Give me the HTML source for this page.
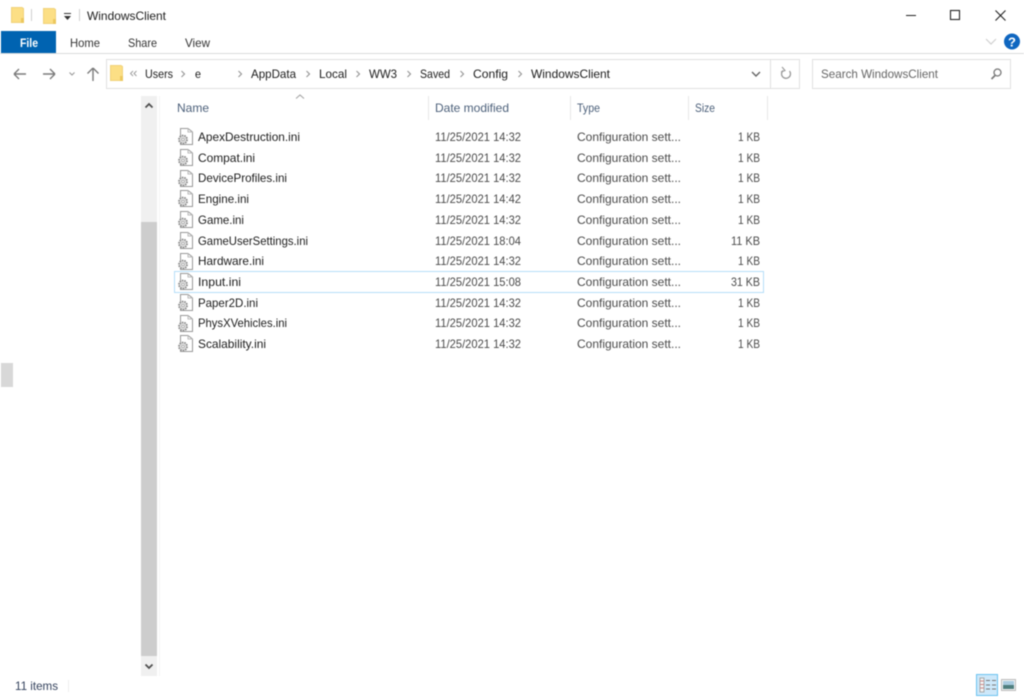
<!DOCTYPE html>
<html><head><meta charset="utf-8"><style>
html,body{margin:0;padding:0;background:#fff;width:1024px;height:698px;overflow:hidden}
svg{display:block;filter:blur(0.4px)}
text{font-family:"Liberation Sans",sans-serif;font-size:12px;fill:#1c1c1c}
.h{fill:#4c607a}.g{fill:#4a4a4a}.s{fill:#666}
</style></head><body>
<svg width="1024" height="698" viewBox="0 0 1024 698" xmlns="http://www.w3.org/2000/svg">
<defs>
<g id="fld"><path d="M.5 .5H11L12.500 1.500V15.500H.500Z" fill="#fcdf85" stroke="#f0d27a" stroke-width="1"/><rect x="10" y="11" width="3" height="5" fill="#ecc85e"/></g>
<g id="ini"><path d="M4.500 1.500H12L16.500 5V17.500H4.500Z" fill="#fff" stroke="#999" stroke-width="1"/><path d="M12 1.500V5H16.500" fill="none" stroke="#bbb"/><circle cx="7" cy="12.500" r="4" fill="#e2e2e2" stroke="#8c8c8c" stroke-width="1.800" stroke-dasharray="1.600 .9"/><circle cx="7" cy="12.500" r="1.300" fill="#fff" stroke="#999" stroke-width=".7"/></g>
<path id="chev" d="M-1.500 -3L1.500 0L-1.500 3" fill="none" stroke="#999" stroke-width="1.200"/>
</defs>

<!-- title bar -->
<use href="#fld" x="11" y="7"/>
<rect x="31" y="9" width="1" height="12" fill="#d0d0d0"/>
<use href="#fld" x="43" y="8"/>
<rect x="64" y="13" width="7" height="1" fill="#333"/>
<path d="M64 16H71L67.500 20Z" fill="#333"/>
<rect x="79" y="9" width="1" height="12" fill="#d0d0d0"/>
<text x="87" y="20" textLength="79" lengthAdjust="spacingAndGlyphs">WindowsClient</text>
<rect x="906" y="15" width="10" height="1" fill="#222"/>
<rect x="950.500" y="10.500" width="9" height="9" fill="none" stroke="#222" stroke-width="1.100"/>
<path d="M995.500 10.500L1005.500 20.500M1005.500 10.500L995.500 20.500" stroke="#222" stroke-width="1.100"/>

<!-- ribbon -->
<rect x="1" y="31" width="55" height="22" fill="#0063b1"/>
<rect x="0" y="53" width="1024" height="1" fill="#dadbdc"/>
<text x="20" y="47" textLength="18" lengthAdjust="spacingAndGlyphs" style="fill:#fff;font-weight:bold;font-size:11.500px">File</text>
<text x="70" y="47" textLength="30" lengthAdjust="spacingAndGlyphs" style="fill:#333">Home</text>
<text x="128" y="47" textLength="29" lengthAdjust="spacingAndGlyphs" style="fill:#333">Share</text>
<text x="185" y="47" textLength="25" lengthAdjust="spacingAndGlyphs" style="fill:#333">View</text>
<path d="M986 39L991 44L996 39" fill="none" stroke="#d0d0d0" stroke-width="1.200"/>
<circle cx="1012" cy="41.500" r="8" fill="#0f66c0"/>
<text x="1012" y="46.500" text-anchor="middle" style="fill:#fff;font-weight:bold;font-size:13px">?</text>

<!-- nav -->
<path d="M14 74H26M14 74L19 69M14 74L19 79" fill="none" stroke="#7a7a7a" stroke-width="1.400"/>
<path d="M55 74H43M55 74L50 69M55 74L50 79" fill="none" stroke="#7a7a7a" stroke-width="1.400"/>
<path d="M69.500 72.500L72 75L74.500 72.500" fill="none" stroke="#999" stroke-width="1.100"/>
<path d="M93 81V68M93 68L87.500 73.500M93 68L98.500 73.500" fill="none" stroke="#7a7a7a" stroke-width="1.400"/>

<!-- address -->
<rect x="106.500" y="59.500" width="693" height="29" fill="#fff" stroke="#e0e0e0"/>
<rect x="770" y="60" width="1" height="28" fill="#e0e0e0"/>
<use href="#fld" x="110" y="65"/>
<path d="M133 71L130.500 73.500L133 76M136.500 71L134 73.500L136.500 76" fill="none" stroke="#999" stroke-width=".9"/>
<text x="145" y="78" textLength="28" lengthAdjust="spacingAndGlyphs">Users</text>
<use href="#chev" x="183" y="74"/>
<text x="195" y="78" textLength="6" lengthAdjust="spacingAndGlyphs">e</text>
<use href="#chev" x="240" y="74"/>
<text x="251" y="78" textLength="45" lengthAdjust="spacingAndGlyphs">AppData</text>
<use href="#chev" x="308" y="74"/>
<text x="319" y="78" textLength="28" lengthAdjust="spacingAndGlyphs">Local</text>
<use href="#chev" x="358" y="74"/>
<text x="369" y="78" textLength="28" lengthAdjust="spacingAndGlyphs">WW3</text>
<use href="#chev" x="409" y="74"/>
<text x="420" y="78" textLength="30" lengthAdjust="spacingAndGlyphs">Saved</text>
<use href="#chev" x="462" y="74"/>
<text x="473" y="78" textLength="35" lengthAdjust="spacingAndGlyphs">Config</text>
<use href="#chev" x="520" y="74"/>
<text x="531" y="78" textLength="79" lengthAdjust="spacingAndGlyphs">WindowsClient</text>
<path d="M752 72L756 76L760 72" fill="none" stroke="#666" stroke-width="1.400"/>
<path d="M789.500 71A4.500 4.500 0 1 1 783 70.500" fill="none" stroke="#999" stroke-width="1.300"/>
<path d="M782 67L785 70.500L781 72" fill="none" stroke="#999" stroke-width="1.100"/>

<!-- search -->
<rect x="812.500" y="59.500" width="198" height="29" fill="#fff" stroke="#e0e0e0"/>
<text x="821" y="78" textLength="117" lengthAdjust="spacingAndGlyphs" class="s">Search WindowsClient</text>
<circle cx="997.500" cy="72.500" r="3.500" fill="none" stroke="#777" stroke-width="1.300"/>
<path d="M995 75.500L991.500 79" stroke="#777" stroke-width="1.600"/>

<!-- left artifact -->
<rect x="1" y="363" width="12" height="24" fill="#d8d8d8"/>

<!-- scrollbar -->
<rect x="141" y="96" width="16" height="580" fill="#f0f0f0"/>
<rect x="141" y="222" width="16" height="434" fill="#cdcdcd"/>
<path d="M145.500 107.500L149 104L152.500 107.500" fill="none" stroke="#505050" stroke-width="1.800"/>
<path d="M145.500 664.500L149 668L152.500 664.500" fill="none" stroke="#505050" stroke-width="1.800"/>
<rect x="159" y="96" width="1" height="580" fill="#f5f5f5"/>

<!-- headers -->
<path d="M296 98.500L300 95L304 98.500" fill="none" stroke="#a5a5a5" stroke-width="1.100"/>
<text x="177" y="112" textLength="32" lengthAdjust="spacingAndGlyphs" class="h">Name</text>
<text x="435" y="112" textLength="74" lengthAdjust="spacingAndGlyphs" class="h">Date modified</text>
<text x="577" y="112" textLength="23" lengthAdjust="spacingAndGlyphs" class="h">Type</text>
<text x="695" y="112" textLength="20" lengthAdjust="spacingAndGlyphs" class="h">Size</text>
<rect x="428" y="96" width="1" height="24" fill="#e8e8e8"/>
<rect x="570" y="96" width="1" height="24" fill="#e8e8e8"/>
<rect x="688" y="96" width="1" height="24" fill="#e8e8e8"/>
<rect x="767" y="96" width="1" height="24" fill="#e8e8e8"/>

<!-- selected -->
<rect x="174.500" y="271.500" width="589" height="21" fill="#fff" stroke="#b5def8"/>

<!-- rows -->
<use href="#ini" x="176" y="127"/>
<text x="198" y="141" textLength="102" lengthAdjust="spacingAndGlyphs">ApexDestruction.ini</text>
<text x="435" y="141" textLength="86" lengthAdjust="spacingAndGlyphs" class="g">11/25/2021 14:32</text>
<text x="577" y="141" textLength="104" lengthAdjust="spacingAndGlyphs" class="g">Configuration sett...</text>
<text x="738" y="141" textLength="22" lengthAdjust="spacingAndGlyphs" class="g">1 KB</text>

<use href="#ini" x="176" y="148"/>
<text x="198" y="162" textLength="57" lengthAdjust="spacingAndGlyphs">Compat.ini</text>
<text x="435" y="162" textLength="86" lengthAdjust="spacingAndGlyphs" class="g">11/25/2021 14:32</text>
<text x="577" y="162" textLength="104" lengthAdjust="spacingAndGlyphs" class="g">Configuration sett...</text>
<text x="738" y="162" textLength="22" lengthAdjust="spacingAndGlyphs" class="g">1 KB</text>

<use href="#ini" x="176" y="169"/>
<text x="198" y="182" textLength="89" lengthAdjust="spacingAndGlyphs">DeviceProfiles.ini</text>
<text x="435" y="182" textLength="86" lengthAdjust="spacingAndGlyphs" class="g">11/25/2021 14:32</text>
<text x="577" y="182" textLength="104" lengthAdjust="spacingAndGlyphs" class="g">Configuration sett...</text>
<text x="738" y="182" textLength="22" lengthAdjust="spacingAndGlyphs" class="g">1 KB</text>

<use href="#ini" x="176" y="189"/>
<text x="198" y="203" textLength="51" lengthAdjust="spacingAndGlyphs">Engine.ini</text>
<text x="435" y="203" textLength="86" lengthAdjust="spacingAndGlyphs" class="g">11/25/2021 14:42</text>
<text x="577" y="203" textLength="104" lengthAdjust="spacingAndGlyphs" class="g">Configuration sett...</text>
<text x="738" y="203" textLength="22" lengthAdjust="spacingAndGlyphs" class="g">1 KB</text>

<use href="#ini" x="176" y="210"/>
<text x="198" y="224" textLength="46" lengthAdjust="spacingAndGlyphs">Game.ini</text>
<text x="435" y="224" textLength="86" lengthAdjust="spacingAndGlyphs" class="g">11/25/2021 14:32</text>
<text x="577" y="224" textLength="104" lengthAdjust="spacingAndGlyphs" class="g">Configuration sett...</text>
<text x="738" y="224" textLength="22" lengthAdjust="spacingAndGlyphs" class="g">1 KB</text>

<use href="#ini" x="176" y="231"/>
<text x="198" y="245" textLength="110" lengthAdjust="spacingAndGlyphs">GameUserSettings.ini</text>
<text x="435" y="245" textLength="86" lengthAdjust="spacingAndGlyphs" class="g">11/25/2021 18:04</text>
<text x="577" y="245" textLength="104" lengthAdjust="spacingAndGlyphs" class="g">Configuration sett...</text>
<text x="731" y="245" textLength="29" lengthAdjust="spacingAndGlyphs" class="g">11 KB</text>

<use href="#ini" x="176" y="252"/>
<text x="198" y="265" textLength="66" lengthAdjust="spacingAndGlyphs">Hardware.ini</text>
<text x="435" y="265" textLength="86" lengthAdjust="spacingAndGlyphs" class="g">11/25/2021 14:32</text>
<text x="577" y="265" textLength="104" lengthAdjust="spacingAndGlyphs" class="g">Configuration sett...</text>
<text x="738" y="265" textLength="22" lengthAdjust="spacingAndGlyphs" class="g">1 KB</text>

<use href="#ini" x="176" y="272"/>
<text x="198" y="286" textLength="43" lengthAdjust="spacingAndGlyphs">Input.ini</text>
<text x="435" y="286" textLength="86" lengthAdjust="spacingAndGlyphs" class="g">11/25/2021 15:08</text>
<text x="577" y="286" textLength="104" lengthAdjust="spacingAndGlyphs" class="g">Configuration sett...</text>
<text x="731" y="286" textLength="29" lengthAdjust="spacingAndGlyphs" class="g">31 KB</text>

<use href="#ini" x="176" y="293"/>
<text x="198" y="307" textLength="60" lengthAdjust="spacingAndGlyphs">Paper2D.ini</text>
<text x="435" y="307" textLength="86" lengthAdjust="spacingAndGlyphs" class="g">11/25/2021 14:32</text>
<text x="577" y="307" textLength="104" lengthAdjust="spacingAndGlyphs" class="g">Configuration sett...</text>
<text x="738" y="307" textLength="22" lengthAdjust="spacingAndGlyphs" class="g">1 KB</text>

<use href="#ini" x="176" y="314"/>
<text x="198" y="327" textLength="89" lengthAdjust="spacingAndGlyphs">PhysXVehicles.ini</text>
<text x="435" y="327" textLength="86" lengthAdjust="spacingAndGlyphs" class="g">11/25/2021 14:32</text>
<text x="577" y="327" textLength="104" lengthAdjust="spacingAndGlyphs" class="g">Configuration sett...</text>
<text x="738" y="327" textLength="22" lengthAdjust="spacingAndGlyphs" class="g">1 KB</text>

<use href="#ini" x="176" y="334"/>
<text x="198" y="348" textLength="68" lengthAdjust="spacingAndGlyphs">Scalability.ini</text>
<text x="435" y="348" textLength="86" lengthAdjust="spacingAndGlyphs" class="g">11/25/2021 14:32</text>
<text x="577" y="348" textLength="104" lengthAdjust="spacingAndGlyphs" class="g">Configuration sett...</text>
<text x="738" y="348" textLength="22" lengthAdjust="spacingAndGlyphs" class="g">1 KB</text>

<!-- status -->
<text x="15" y="690" textLength="43" lengthAdjust="spacingAndGlyphs" style="fill:#33415c">11 items</text>
<rect x="68" y="680" width="1" height="12" fill="#eee"/>

<rect x="976.500" y="674.500" width="21" height="21" fill="#cde8fa" stroke="#6cc3f0"/>
<rect x="980" y="678" width="4" height="14" fill="#f4f4f4" stroke="#999" stroke-width=".8"/>
<path d="M980 681H984M980 684.500H984M980 688H984" stroke="#c88" stroke-width="1"/>
<path d="M986 680.500H990M992 680.500H996M986 685H990M992 685H996M986 689H990M992 689H996" stroke="#777" stroke-width="1"/>
<rect x="1001.500" y="679.500" width="14" height="11" fill="#f4f4f4" stroke="#bbb" stroke-width="1"/>
<rect x="1003" y="681" width="11" height="4" fill="#a9cbe0"/>
<rect x="1003" y="685" width="11" height="4" fill="#4f7f7f"/>
</svg>
</body></html>
